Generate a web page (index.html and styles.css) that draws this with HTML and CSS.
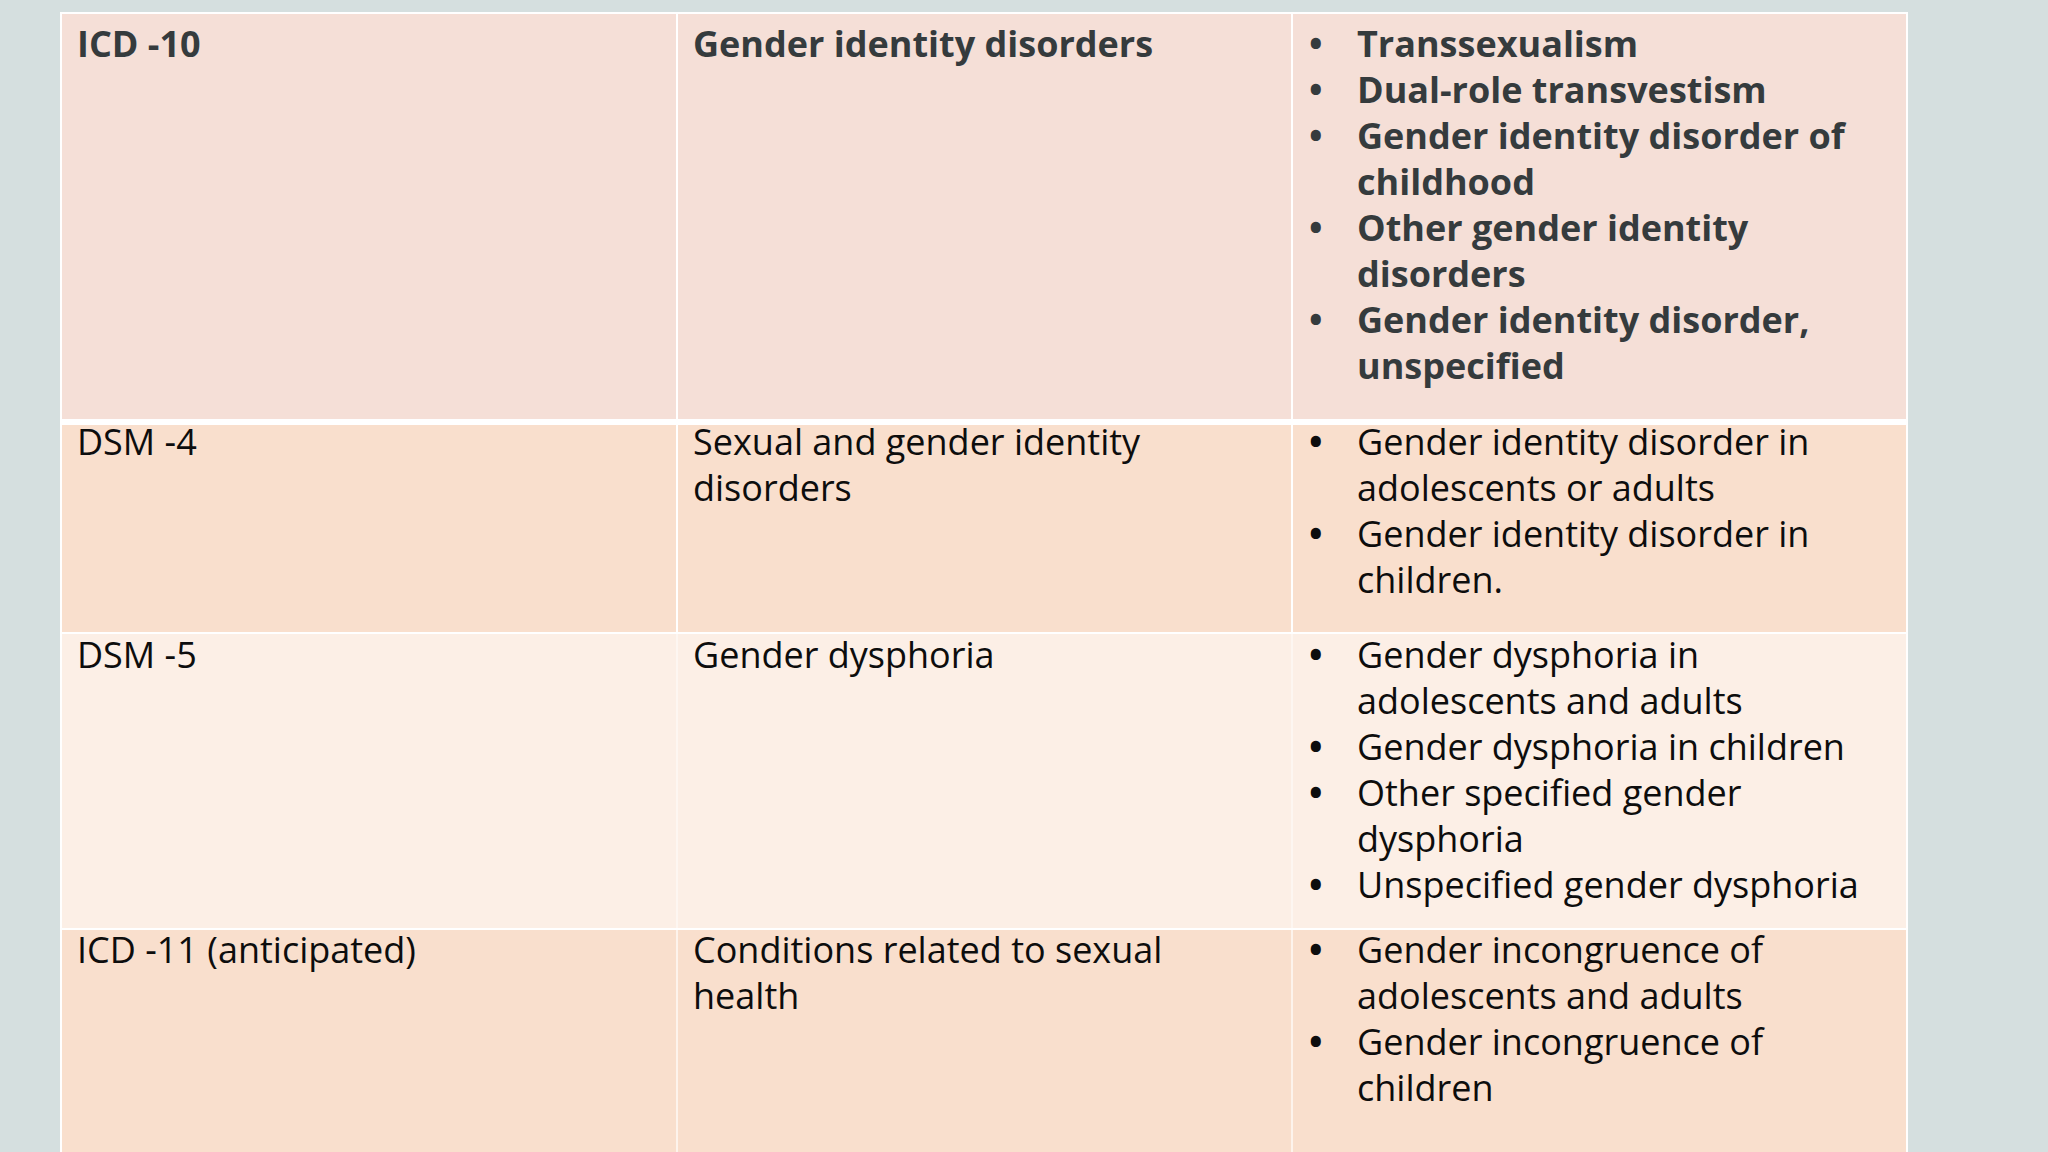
FILE: index.html
```html
<!DOCTYPE html>
<html lang="en">
<head>
<meta charset="utf-8">
<title>Gender identity classification</title>
<link rel="stylesheet" href="styles.css">
</head>
<body>
<div class="sheet">
  <div class="row row-head">
    <div class="cell"><div class="txt">ICD -10</div></div>
    <div class="cell"><div class="txt">Gender identity disorders</div></div>
    <div class="cell">
      <ul class="txt bullets">
        <li>Transsexualism</li>
        <li>Dual-role transvestism</li>
        <li>Gender identity disorder of<br>childhood</li>
        <li>Other gender identity<br>disorders</li>
        <li>Gender identity disorder,<br>unspecified</li>
      </ul>
    </div>
  </div>
  <div class="row row-a">
    <div class="cell"><div class="txt">DSM -4</div></div>
    <div class="cell"><div class="txt">Sexual and gender identity<br>disorders</div></div>
    <div class="cell">
      <ul class="txt bullets">
        <li>Gender identity disorder in<br>adolescents or adults</li>
        <li>Gender identity disorder in<br>children.</li>
      </ul>
    </div>
  </div>
  <div class="row row-b">
    <div class="cell"><div class="txt">DSM -5</div></div>
    <div class="cell"><div class="txt">Gender dysphoria</div></div>
    <div class="cell">
      <ul class="txt bullets">
        <li>Gender dysphoria in<br>adolescents and adults</li>
        <li>Gender dysphoria in children</li>
        <li>Other specified gender<br>dysphoria</li>
        <li>Unspecified gender dysphoria</li>
      </ul>
    </div>
  </div>
  <div class="row row-c">
    <div class="cell"><div class="txt">ICD -11 (anticipated)</div></div>
    <div class="cell"><div class="txt">Conditions related to sexual<br>health</div></div>
    <div class="cell">
      <ul class="txt bullets">
        <li>Gender incongruence of<br>adolescents and adults</li>
        <li>Gender incongruence of<br>children</li>
      </ul>
    </div>
  </div>
</div>
</body>
</html>
```

FILE: styles.css
```css
html, body {
  margin: 0;
  padding: 0;
}
body {
  background: #d5dfdf;
  width: 2048px;
  height: 1152px;
  overflow: hidden;
  font-family: "Open Sans", "Noto Sans", sans-serif;
  font-size: 36px;
  line-height: 46px;
  color: #0d0d0d;
}
.sheet {
  margin: 12px 0 0 60px;
  width: 1844px;
  background: #ffffff;
  border: 2px solid #ffffff;
  border-bottom: 0;
  display: flex;
  flex-direction: column;
}
.row {
  display: grid;
  grid-template-columns: 614px 613px 613px;
  column-gap: 2px;
  background: #ffffff;
}
.row-head {
  height: 405px;
  margin-bottom: 6px;
  font-weight: 700;
  color: #353b3d;
}
.row-head .cell { background: #f5dfd7; }
.row-head .txt { margin-top: 7px; }
.row-a { height: 207px; margin-bottom: 2px; }
.row-a .cell { background: #f9dfcd; }
.row-a .txt { margin-top: -6px; }
.row-b { height: 294px; margin-bottom: 2px; background: #fdf6f1; }
.row-b .cell { background: #fcefe6; }
.row-b .txt { margin-top: -2px; }
.row-c { height: 222px; background: #fdf3ec; }
.row-c .cell { background: #f9dfcd; }
.row-c .txt { margin-top: -3px; }
.cell {
  padding: 0 6px 0 15px;
}
.bullets {
  list-style: none;
  margin-bottom: 0;
  padding: 0 0 0 1px;
}
.bullets li {
  display: grid;
  grid-template-columns: 48px 1fr;
  white-space: nowrap;
}
.bullets li::before {
  content: "\2022";
  font-weight: 700;
}
```
